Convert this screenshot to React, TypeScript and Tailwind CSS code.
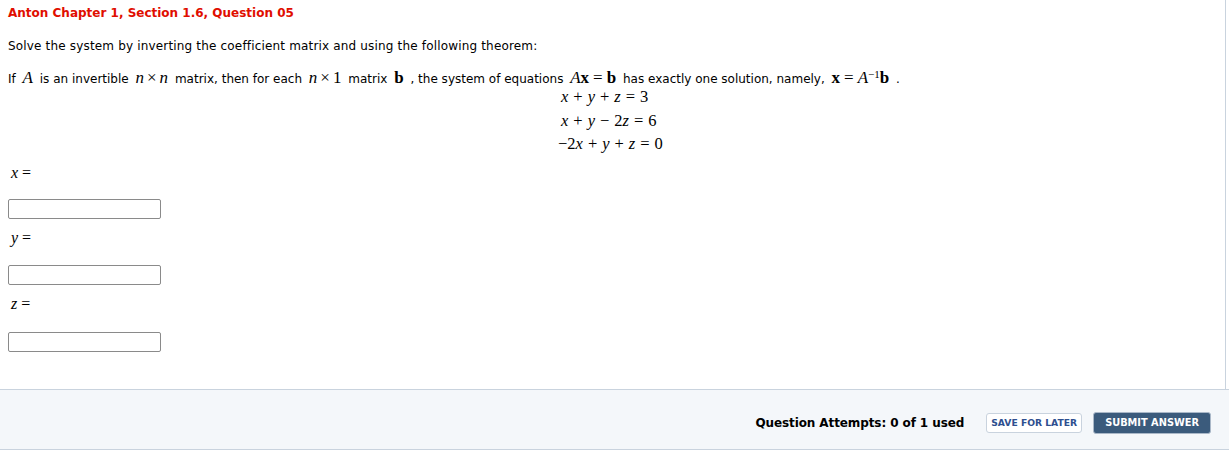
import React from "react";

const serif = "font-['Liberation_Serif','Times_New_Roman',serif]";

function Input() {
  return <div className="w-[153px] h-[20px] border border-[#8a8a8a] rounded-[2px] bg-white" />;
}

function Op({ c }: { c: string }) {
  return <span className="mx-[4px]">{c}</span>;
}

function EOp({ c }: { c: string }) {
  return <span className="mx-[5px]">{c}</span>;
}

function SOp({ c }: { c: string }) {
  return <span className="mx-[3px]">{c}</span>;
}

export default function App() {
  return (
    <div className="w-[1229px] h-[461px] bg-white font-['DejaVu_Sans','Verdana',sans-serif] text-[12px] text-black overflow-hidden">
      <div className="w-[1226px] h-[389px] border-r border-[#c9d3de] pl-[8px] pt-[6px] flex flex-col">
        <div className="text-[#e00e00] font-bold text-[12px] leading-[15px]">Anton Chapter 1, Section 1.6, Question 05</div>
        <div className="mt-[18px] leading-[15px] tracking-[0.17px]">Solve the system by inverting the coefficient matrix and using the following theorem:</div>
        <div className="mt-[16px] leading-[15px] flex items-baseline whitespace-pre">
          <span>If </span>
          <span className={`${serif} italic text-[17px] mx-[3px]`}>A</span>
          <span> is an invertible </span>
          <span className={`${serif} text-[17px] mx-[3px]`}><i>n</i><SOp c="×" /><i>n</i></span>
          <span> matrix, then for each </span>
          <span className={`${serif} text-[17px] mx-[3px]`}><i>n</i><SOp c="×" />1</span>
          <span> matrix </span>
          <span className={`${serif} font-bold text-[17px] mx-[3px]`}>b</span>
          <span> , the system of equations </span>
          <span className={`${serif} text-[17px] mx-[3px]`}><i>A</i><b>x</b><Op c="=" /><b>b</b></span>
          <span> has exactly one solution, namely, </span>
          <span className={`${serif} text-[17px] mx-[3px]`}><b>x</b><Op c="=" /><i>A</i><sup className="text-[11px]">−1</sup><b>b</b></span>
          <span> .</span>
        </div>
        <div className={`${serif} text-[16.5px] leading-[23.5px] ml-[550px] -mt-[2px]`}>
          <div className="pl-[3px]"><i>x</i><EOp c="+" /><i>y</i><EOp c="+" /><i>z</i><EOp c="=" />3</div>
          <div className="pl-[3px]"><i>x</i><EOp c="+" /><i>y</i><EOp c="−" />2<i>z</i><EOp c="=" />6</div>
          <div>−2<i>x</i><EOp c="+" /><i>y</i><EOp c="+" /><i>z</i><EOp c="=" />0</div>
        </div>
        <div className={`${serif} text-[16px] leading-[18px] mt-[8px] pl-[3px]`}><i>x</i><span className="ml-[4px]">=</span></div>
        <div className="mt-[17px]"><Input /></div>
        <div className={`${serif} text-[16px] leading-[18px] mt-[10px] pl-[3px]`}><i>y</i><span className="ml-[4px]">=</span></div>
        <div className="mt-[18px]"><Input /></div>
        <div className={`${serif} text-[16px] leading-[18px] mt-[10px] pl-[3px]`}><i>z</i><span className="ml-[4px]">=</span></div>
        <div className="mt-[19px]"><Input /></div>
      </div>
      <div className="h-[61px] bg-[#f4f7fa] border-t border-b border-[#c9d3de] flex items-center justify-end pr-[18px] pt-[6px]">
        <span className="font-bold text-[12px] tracking-[-0.1px] mr-[22px]">Question Attempts: 0 of 1 used</span>
        <button className="h-[20px] px-[4px] bg-white border border-[#c9d3de] rounded-[3px] text-[#2e4f8f] font-bold text-[9.2px] leading-none mr-[11px]">SAVE FOR LATER</button>
        <button className="h-[22px] px-[11px] bg-[#3b5b7c] border border-[#aab8c8] rounded-[3px] text-white font-bold text-[9.8px] leading-none">SUBMIT ANSWER</button>
      </div>
    </div>
  );
}
